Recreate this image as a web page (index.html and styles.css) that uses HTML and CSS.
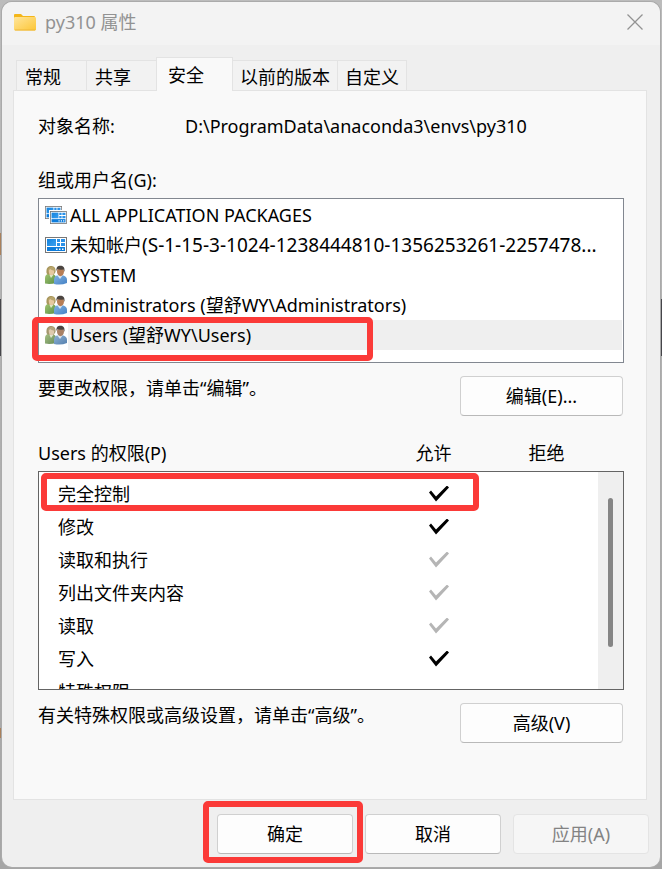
FILE: index.html
```html
<!DOCTYPE html>
<html lang="zh-CN">
<head>
<meta charset="utf-8">
<meta name="viewport" content="width=device-width, initial-scale=1">
<title>py310 属性</title>
<link rel="stylesheet" href="styles.css">
</head>
<body>
<svg class="defs" aria-hidden="true">
  <defs>
    <linearGradient id="blue" x1="0" y1="0" x2="1" y2="1"><stop offset="0" stop-color="#1181dc"/><stop offset="1" stop-color="#3aa0f0"/></linearGradient>
    <linearGradient id="folder" x1="0" y1="0" x2="1" y2="1"><stop offset="0" stop-color="#ffe59a"/><stop offset="1" stop-color="#fcc636"/></linearGradient>
    <linearGradient id="green" x1="0" y1="0" x2="1" y2="1"><stop offset="0" stop-color="#a3c46e"/><stop offset="1" stop-color="#5b9048"/></linearGradient>
    <linearGradient id="shirt" x1="0" y1="0" x2="1" y2="1"><stop offset="0" stop-color="#82b4e4"/><stop offset="1" stop-color="#4481c4"/></linearGradient>
    <symbol id="tile" viewBox="0 0 22 16" preserveAspectRatio="none">
      <rect x=".5" y=".5" width="21" height="15" fill="#fff" stroke="#777"/>
      <rect x="2" y="2" width="9" height="7" fill="url(#blue)"/>
      <path fill="#2a91e8" d="M12 2h3v3h-3zM16 2h4v3h-4zM12 6h3v3h-3zM16 6h4v3h-4z"/>
      <rect x="2" y="10" width="18" height="4" fill="#0d7cdb"/>
      <path fill="#fff" d="M11 11.500h1.500V13H11zM14 11.500h1.500V13H14zM17 11.500h1.500V13H17z"/>
    </symbol>
    <symbol id="people" viewBox="0 0 22 20">
      <path fill="url(#green)" d="M0 18.500V13c0-3 2-4.500 5-4.500s6 1.500 6 4.500v5q-6 1.500-11 .5z"/>
      <path fill="#dfe9cb" d="M4 9l2 4 3-4z"/>
      <path fill="#a9975c" d="M1.500 8C1 3 3 1 6 1s5 2 4.500 6l-2 3-6-.5z"/>
      <ellipse cx="6.500" cy="6.500" rx="2.700" ry="3.700" fill="#e6c9a0"/>
      <path fill="#b9a66d" d="M3 7c0-4 2-5 4-5s3 2 3 4Q6 5 5 4 4 5 3 7z"/>
      <path fill="url(#shirt)" d="M9 19v-4c0-4 3-5 6-5 4 0 7 1.500 7 5v3q-6 2.500-13 1z"/>
      <path fill="#d9e8f6" d="M12 10l3 4 3-4z"/>
      <ellipse cx="15.500" cy="6.500" rx="3.500" ry="4.700" fill="#b67e57"/>
      <path fill="#4b4541" d="M11.500 6C11 2 13 .8 15.500.8S20 2 19.500 7l-1-2.500q-4 .5-6-.5z"/>
    </symbol>
  </defs>
</svg>

<main class="window">
  <header class="titlebar">
    <svg class="folder" viewBox="0 0 22 18" aria-hidden="true">
      <path fill="#f4b619" d="M0 2Q0 1 1 1h6l2 2h11q1 0 1 1v5H0z"/>
      <rect y="4" width="22" height="13.500" rx="1.200" fill="url(#folder)"/>
      <path stroke="#edb73b" d="M1 17h20"/>
    </svg>
    <h1>py310 属性</h1>
    <button class="close" type="button" aria-label="关闭"><svg viewBox="0 0 16 16" aria-hidden="true"><path d="M.5.5l15 15M15.500.5l-15 15"/></svg></button>
  </header>

  <nav class="tabs" role="tablist">
    <button class="tab tab-wide" type="button" role="tab">常规</button>
    <button class="tab tab-wide" type="button" role="tab">共享</button>
    <button class="tab active" type="button" role="tab" aria-selected="true">安全</button>
    <button class="tab" type="button" role="tab">以前的版本</button>
    <button class="tab" type="button" role="tab">自定义</button>
  </nav>

  <section class="panel" role="tabpanel">
    <div class="object"><span>对象名称:</span><span>D:\ProgramData\anaconda3\envs\py310</span></div>

    <div class="label" id="groups">组或用户名(G):</div>
    <ul class="list" role="listbox" aria-labelledby="groups">
      <li role="option"><svg class="icon" viewBox="0 0 22 20" aria-hidden="true"><use href="#tile" y="1" width="17" height="13"/><path fill="#fff" d="M4 5h18v1H5v13H4z"/><use href="#tile" x="5" y="6" width="17" height="13"/></svg><span class="name">ALL APPLICATION PACKAGES</span></li>
      <li role="option"><svg class="icon" viewBox="0 0 22 20" aria-hidden="true"><use href="#tile" y="2" width="22" height="16"/></svg><span class="name">未知帐户<span class="sid">(S-1-15-3-1024-1238444810-1356253261-2257478...</span></span></li>
      <li role="option"><svg class="icon" aria-hidden="true"><use href="#people"/></svg><span class="name">SYSTEM</span></li>
      <li role="option"><svg class="icon" aria-hidden="true"><use href="#people"/></svg><span class="name">Administrators (望舒WY\Administrators)</span></li>
      <li role="option" aria-selected="true" class="selected"><svg class="icon" aria-hidden="true"><use href="#people"/></svg><span class="name">Users (望舒WY\Users)</span><i class="mark mark-user"></i></li>
    </ul>

    <div class="action"><p>要更改权限，请单击“编辑”。</p><button class="button" type="button">编辑(E)...</button></div>

    <div class="columns"><span id="perms">Users 的权限(P)</span><span>允许</span><span>拒绝</span></div>
    <div class="permissions">
      <div class="viewport">
        <table aria-labelledby="perms">
          <tbody>
            <tr><th scope="row"><label for="p1">完全控制</label></th><td><input id="p1" type="checkbox" checked></td><td></td></tr>
            <tr><th scope="row"><label for="p2">修改</label></th><td><input id="p2" type="checkbox" checked></td><td></td></tr>
            <tr><th scope="row"><label for="p3">读取和执行</label></th><td><input id="p3" type="checkbox" checked disabled></td><td></td></tr>
            <tr><th scope="row"><label for="p4">列出文件夹内容</label></th><td><input id="p4" type="checkbox" checked disabled></td><td></td></tr>
            <tr><th scope="row"><label for="p5">读取</label></th><td><input id="p5" type="checkbox" checked disabled></td><td></td></tr>
            <tr><th scope="row"><label for="p6">写入</label></th><td><input id="p6" type="checkbox" checked></td><td></td></tr>
            <tr><th scope="row">特殊权限</th><td></td><td></td></tr>
          </tbody>
        </table>
      </div>
      <div class="scrollbar"><div class="thumb"></div></div>
      <i class="mark mark-control"></i>
    </div>

    <div class="action"><p>有关特殊权限或高级设置，请单击“高级”。</p><button class="button" type="button">高级(V)</button></div>
  </section>

  <footer class="footer">
    <div class="confirm"><button class="button" type="button">确定</button><i class="mark mark-ok"></i></div>
    <button class="button" type="button">取消</button>
    <button class="button" type="button" disabled>应用(A)</button>
  </footer>
</main>
</body>
</html>
```
FILE: styles.css
```css
* { box-sizing: border-box; }

body {
  margin: 0;
  padding: 2px;
  min-height: 100vh;
  display: flex;
  color: #000;
  font: 18px/24px "Noto Sans", "Noto Sans CJK SC", sans-serif;
  background:
    linear-gradient(#45454a, #45454a) 0 299px / 100% 57px no-repeat,
    linear-gradient(#a9805b, #a9805b) 0 233px / 2px 22px no-repeat,
    linear-gradient(#a9805b, #a9805b) 0 728px / 2px 10px no-repeat,
    linear-gradient(#bcbcbc, #b0b0b0 45%, #a6a6a6);
}

button { font: inherit; color: inherit; }
h1, p, ul { margin: 0; padding: 0; font: inherit; }
.defs { position: absolute; width: 0; height: 0; }

.window {
  flex: 1;
  min-width: 0;
  display: flex;
  flex-direction: column;
  background: #efefef;
  border-radius: 10px;
  box-shadow: 0 0 0 1px #aaa;
}

.titlebar {
  display: flex;
  align-items: center;
  height: 43px;
  padding: 0 17px 3px 12px;
  background: #f3f3f3;
  border-radius: 10px 10px 0 0;
  color: #929292;
}
.folder { width: 22px; height: 18px; margin-right: 9px; }
.close {
  margin-left: auto;
  padding: 0;
  width: 16px;
  height: 16px;
  border: 0;
  background: none;
}
.close svg { display: block; width: 16px; height: 16px; fill: none; stroke: #929292; stroke-width: 1.3; }

.tabs { display: flex; align-items: flex-end; padding: 12px 14px 0; }
.tab {
  height: 30px;
  padding: 3px 7px 0;
  border: 1px solid #e3e3e3;
  border-width: 1px 1px 0 0;
  background: #f2f2f2;
  white-space: nowrap;
}
.tab:first-child { border-left-width: 1px; }
.tab-wide { padding-right: 25px; padding-left: 8px; }
.tab.active {
  position: relative;
  height: 34px;
  margin: 0 0 -1px -1px;
  padding: 0 28px 0 11px;
  border-left-width: 1px;
  background: #f9f9f9;
}

.panel {
  flex: 1;
  margin: 0 13px 0 11px;
  padding: 23px 22px 20px 24px;
  border: 1px solid #e3e3e3;
  background: #f9f9f9;
}
.object { display: grid; grid-template-columns: 147px 1fr; margin-bottom: 30px; }
.label { margin-bottom: 6px; }

.list {
  height: 165px;
  padding: 1px;
  margin-bottom: 13px;
  border: 1px solid #828790;
  background: #fff;
  list-style: none;
}
.list li { position: relative; display: flex; align-items: center; height: 30px; padding-left: 5px; }
.icon { flex: none; width: 22px; height: 20px; margin-right: 1px; }
.name { flex: 1; padding-left: 2px; line-height: 30px; white-space: nowrap; overflow: hidden; text-overflow: ellipsis; }
.sid { font-size: 19px; }
.selected .name { background: #efefef; }
.selected .icon { filter: saturate(.7); }

.action { display: flex; justify-content: space-between; align-items: flex-start; margin-bottom: 25px; padding-right: 1px; }
.action .button { width: 163px; }
.button {
  width: 136px;
  height: 40px;
  padding: 0;
  border: 1px solid #d0d0d0;
  border-bottom-color: #b9b9b9;
  border-radius: 4px;
  background: #fdfdfd;
}
.button:disabled { color: #838383; border-color: #e4e4e4; background: #f6f6f6; }

.columns { display: grid; grid-template-columns: 1fr 113px 113px 21px; margin-bottom: 6px; text-align: center; }
.columns span:first-child { text-align: left; }

.permissions {
  position: relative;
  display: flex;
  height: 219px;
  margin-bottom: 13px;
  border: 1px solid #646464;
  background: #fff;
}
.viewport { flex: 1; padding-top: 5px; overflow: hidden; }
table { width: 100%; border-spacing: 0; table-layout: fixed; }
tr { height: 33px; }
th { padding: 0 0 0 19px; font-weight: inherit; text-align: left; }
td { width: 106px; padding: 0; }
td input {
  appearance: none;
  display: block;
  width: 20px;
  height: 16px;
  margin: 0 auto;
  background: #000;
  clip-path: polygon(0 7px, 2px 5px, 7px 11px, 18px 0, 20px 2px, 7px 16px);
}
td input:disabled { background: #b5b5b5; }
.scrollbar { width: 25px; padding: 26px 10px 0; background: #efefef; }
.thumb { height: 149px; border-radius: 3px; background: #858585; }

.footer { display: flex; justify-content: flex-end; gap: 12px; padding: 14px 11px 13px; }
.confirm { position: relative; }

.mark { position: absolute; border: 6px solid #fb3a38; border-radius: 5px; pointer-events: none; }
.mark-user { left: -8px; top: -3px; width: 341px; height: 44px; }
.mark-control { left: 2px; top: 1px; width: 438px; height: 38px; }
.mark-ok { inset: -13px -10px -9px -14px; }
```
